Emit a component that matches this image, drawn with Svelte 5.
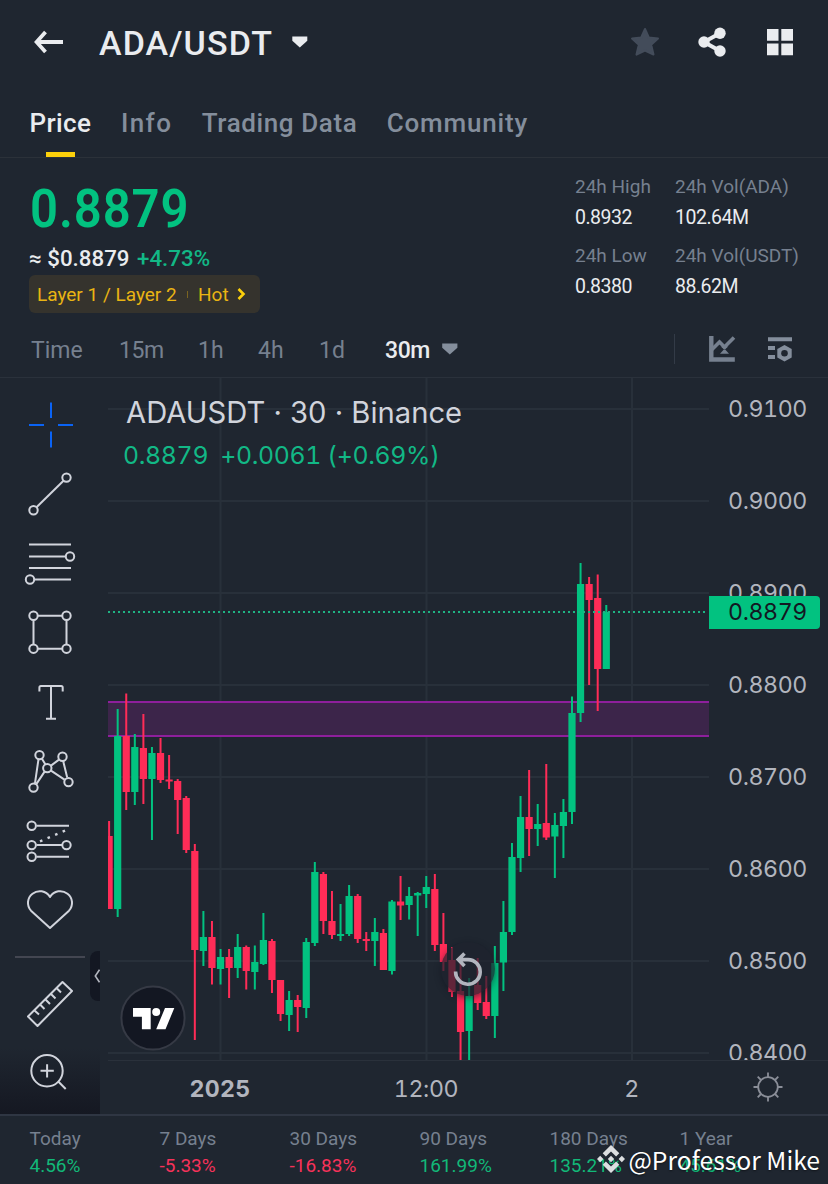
<script>
  const tabs = ["Price", "Info", "Trading Data", "Community"];
  let activeTab = "Price";

  const stats = [
    { label: "24h High", value: "0.8932" },
    { label: "24h Vol(ADA)", value: "102.64M" },
    { label: "24h Low", value: "0.8380" },
    { label: "24h Vol(USDT)", value: "88.62M" },
  ];

  const intervals = ["Time", "15m", "1h", "4h", "1d", "30m"];
  let activeInterval = "30m";

  const periods = [
    { label: "Today", value: "4.56%" },
    { label: "7 Days", value: "-5.33%" },
    { label: "30 Days", value: "-16.83%" },
    { label: "90 Days", value: "161.99%" },
    { label: "180 Days", value: "135.21%" },
    { label: "1 Year", value: "45.61%" },
  ];

  const prices = ["0.9100", "0.9000", "0.8900", "0.8800", "0.8700", "0.8600", "0.8500", "0.8400"];
  const gridY = prices.map((_, i) => 409 + i * 92);
  const gridX = [220.5, 426.5, 632];

  // high, body top, body bottom, low, direction (1 = up)
  const candles = [
    [821, 836, 909, 909, 0], [709, 736, 909, 917, 1], [693.5, 736, 792, 810, 0],
    [734, 747, 792, 805, 1], [714, 748, 779, 804, 0], [747, 753, 779, 840, 1],
    [738, 753, 780, 783, 0], [755, 779.5, 781.5, 789, 0], [779, 781, 800, 834, 0],
    [796, 798, 850, 853, 0], [844, 851, 950, 1040, 0], [911, 937, 951, 966, 1],
    [921, 937, 968, 984.5, 0], [949, 957, 969, 984.5, 1], [949, 957, 968, 998, 0],
    [934, 947, 968, 978, 1], [945.5, 947, 971, 989.5, 0], [945.5, 962, 972, 989.5, 1],
    [913, 940, 964, 965, 1], [939, 941, 980, 993, 0], [980, 980, 1014, 1021, 0],
    [991, 1000, 1015, 1031, 1], [995, 1000, 1007, 1032, 0], [938, 942, 1008, 1018, 1],
    [862, 872, 943, 946, 1], [872, 874, 921, 934, 0], [891, 921, 935, 939, 0],
    [904, 934, 936, 941, 1], [885, 896, 934, 936, 1], [894, 896, 939, 943, 0],
    [932, 939, 941, 951, 0], [918, 932, 941, 966, 1], [929, 933, 970, 970, 0],
    [900, 901.5, 971, 974.5, 1], [876, 901.5, 905.5, 920, 0], [887, 896, 905, 919.5, 1],
    [892, 893, 895.5, 936, 1], [876, 887, 894, 908, 1], [874, 889, 945, 951, 0],
    [913, 944, 962, 971, 0], [947, 960, 992, 997, 0], [958, 991, 1032, 1062, 0],
    [978, 996, 1031, 1062, 1], [958, 985, 1003, 1010, 0], [976, 1002, 1016, 1019, 0],
    [946, 963, 1016, 1038, 1], [901, 932, 962.5, 991, 1], [843, 857, 932, 935, 1],
    [796, 817, 858, 872, 1], [770, 817, 829, 856, 0], [804, 824, 829, 846, 1],
    [764, 823, 837.5, 840, 0], [813, 825, 836.5, 878, 1], [799, 812, 826, 858, 1],
    [696.5, 713, 812, 824, 1], [563, 584, 713, 722, 1], [577, 584, 600, 685, 0],
    [574.5, 598, 669, 711, 0], [605, 612, 669, 669, 1],
  ];
  const cx = (i) => 109.1 + i * 8.572;
</script>

<div class="screen">
  <header>
    <button class="back" aria-label="Back">
      <svg width="30" height="24" viewBox="0 0 30 24"><path d="M12.500 2 3.600 12l8.900 10M4 12h26" fill="none" stroke="#eaecef" stroke-width="3.800" /></svg>
    </button>
    <h1>ADA/USDT</h1>
    <svg class="caret" width="16" height="12" viewBox="0 0 16 12"><path d="M.3.5h15v4.200L7.800 11.500.3 4.700z" fill="#eaecef" /></svg>
    <div class="actions">
      <svg width="30" height="30" viewBox="0 0 30 30"><path d="m15 2 3.800 8.500 9.200 1.100-6.800 6.200 2.300 9.800L15 23.500l-8.500 4.100 2.300-9.800L2 11.600l9.200-1.100z" fill="#434c5a" stroke="#434c5a" stroke-width="2" stroke-linejoin="round" /></svg>
      <svg width="30" height="30" viewBox="0 0 30 30"><path d="M23 6.300 7 15l16 9" fill="none" stroke="#eaecef" stroke-width="4" /><g fill="#eaecef"><circle cx="23" cy="6.300" r="5.700" /><circle cx="7" cy="15" r="5.700" /><circle cx="23" cy="24" r="5.700" /></g></svg>
      <svg width="30" height="30" viewBox="0 0 30 30"><path d="M3 2h11.500v11.700H3zM17.300 2H29v11.700H17.300zM3 16.500h11.500v11.700H3zM17.300 16.500H29v11.700H17.300z" fill="#eaecef" /></svg>
    </div>
  </header>

  <nav class="tabs">
    {#each tabs as tab}
      <button class:active={tab === activeTab} on:click={() => (activeTab = tab)}>{tab}</button>
    {/each}
  </nav>

  <section class="summary">
    <div class="quote">
      <div class="price">0.8879</div>
      <div class="fiat">≈ $0.8879 <span>+4.73%</span></div>
      <div class="tag">
        <span class="layer">Layer 1 / Layer 2</span><i></i><span>Hot</span>
        <svg width="9" height="12" viewBox="0 0 9 12"><path d="m1.500 1 5 5-5 5" fill="none" stroke="#fcd00b" stroke-width="2.600" /></svg>
      </div>
    </div>
    <div class="stats">
      {#each stats as stat}
        <div>
          <div class="label">{stat.label}</div>
          <div class="value">{stat.value}</div>
        </div>
      {/each}
    </div>
  </section>

  <div class="intervals">
    {#each intervals as interval}
      <button class:active={interval === activeInterval} on:click={() => (activeInterval = interval)}>{interval}</button>
    {/each}
    <svg class="more" width="16" height="12" viewBox="0 0 16 12"><path d="M.2.5h15.200v4.300L7.800 11.500.2 4.800z" fill="#848e9c" /></svg>
    <div class="chart-actions">
      <svg width="28" height="28" viewBox="0 0 28 28"><path d="M3.300 1v23.500h23.500" fill="none" stroke="#76808f" stroke-width="4.400" /><path d="m4 14.500 7.500-7.500 5 5L26 2.500" fill="none" stroke="#76808f" stroke-width="3.600" /><path d="m12.700 11.500 3.800 3.300 3.800-3.300zM12 18.800l4.500-5 4.500 5z" fill="#76808f" /></svg>
      <svg width="26" height="26" viewBox="0 0 26 26"><path d="M1 3.300h24M1 12h7M1 21h7" stroke="#848e9c" stroke-width="4" /><path d="M17.500 9l7.200 4.100v8.300l-7.200 4.100-7.200-4.100v-8.300z" fill="#848e9c" /><circle cx="17.500" cy="17.200" r="3.300" fill="#1f2630" /></svg>
    </div>
  </div>

  <section class="chart">
    <aside class="tools">
      <svg class="tool" viewBox="22 390.400 56 69.300"><path d="M29 425.300h15M58 425.300h15M51 403v15.500M51 432v16" stroke="#0a63f5" /></svg>
      <svg class="tool" viewBox="22 459.700 56 69.300"><path d="m36.500 507 27-26.500" /><circle cx="33.500" cy="510" r="4.200" /><circle cx="66.500" cy="477.300" r="4.200" /></svg>
      <svg class="tool" viewBox="22 529 56 69.300"><path d="M29 544.600h42M29 556.500h37M29 568h42M34 579.500h37" /><circle cx="70" cy="556.500" r="4.200" /><circle cx="30" cy="579.500" r="4.200" /></svg>
      <svg class="tool" viewBox="22 598.300 56 69.300"><path d="M38 616h24M38 649h24M33.500 620.500v24M66.500 620.500v24" /><circle cx="33.500" cy="616" r="4.200" /><circle cx="66.500" cy="616" r="4.200" /><circle cx="33.500" cy="649" r="4.200" /><circle cx="66.500" cy="649" r="4.200" /></svg>
      <svg class="tool" viewBox="22 667.600 56 69.300"><path d="M39.400 691v-4q0-1.500 1.500-1.500h20.300q1.500 0 1.500 1.500v4M51 685.500v33M46 718.400h10" /></svg>
      <svg class="tool" viewBox="22 736.900 56 69.300"><path d="m35 783 3.500-24M36.300 784l8.300-12.500M41.500 758l4 6.500M51 765.500l8-6M51 770.500l13.500 9M63.200 761l4 16.500" /><circle cx="39.500" cy="755" r="4.200" /><circle cx="62.500" cy="756.700" r="4.200" /><circle cx="47.300" cy="768" r="4.200" /><circle cx="33.500" cy="787.500" r="4.200" /><circle cx="68.500" cy="782" r="4.200" /></svg>
      <svg class="tool" viewBox="22 806.200 56 69.300"><path d="M36.500 826H69M36.500 845.300H62M36.500 857H69" /><path d="m40 841.500 27-11.500" stroke-width="2.400" stroke-dasharray="2.600 5.600" /><circle cx="31.700" cy="826" r="4.200" /><circle cx="31.700" cy="845.300" r="4.200" /><circle cx="66.500" cy="845.300" r="4.200" /><circle cx="31.700" cy="857" r="4.200" /></svg>
      <svg class="tool" viewBox="22 875.500 56 69.300"><path d="M50 897.500c-4-6.500-12-7.500-17.500-3.300-5.500 4.300-6 12-1.500 17L50 928.400l19-17.200c4.500-5 4-12.700-1.500-17-5.500-4.200-13.500-3.200-17.500 3.300z" stroke-linejoin="round" /></svg>
      <hr />
      <svg class="tool" viewBox="22 970 56 69.300"><path d="m62.500 982 9.500 9-34.500 35-9.500-9.500zM34.500 1010.500l4.500 4M40 1004.500l4.500 4.500M45.500 999.500l4.500 4.500M51 994l4.500 4.500M56.500 988l4.500 4.500" stroke-linejoin="round" /></svg>
      <svg class="tool" viewBox="22 1039.700 56 69.300"><circle cx="47" cy="1070.500" r="15.700" /><path d="M40.500 1070.500h13.300M47.100 1064v13.300M58 1081l7.700 7.700" /></svg>
    </aside>

    <div class="collapse"><svg width="6" height="14" viewBox="0 0 6 14"><path d="M5.500.7 1.300 7l4.200 6.300" fill="none" stroke="#b2b5be" stroke-width="1.600" /></svg></div>

    <div class="plot">
      <svg class="candles" width="601" height="683" viewBox="108 378 601 683">
        {#each gridY as y}
          <rect x="108" y={y - 1} width="601" height="2" fill="#28303a" />
        {/each}
        {#each gridX as x}
          <rect x={x - 1} y="378" width="2" height="683" fill="#28303a" />
        {/each}
        <rect x="108" y="702" width="601" height="34" fill="#3c254a" />
        <path d="M108 702h601M108 736h601" stroke="#8e1f9c" stroke-width="2" />
        {#each candles as [high, top, bottom, low, up], i}
          <g class:up>
            <rect x={cx(i) - 1} y={high} width="2" height={low - high} />
            <rect x={cx(i) - 3.6} y={top} width="7.200" height={bottom - top} />
          </g>
        {/each}
        <path d="M108 612h600" stroke="#1fb383" stroke-width="2" stroke-dasharray="2 3" />
      </svg>
      <div class="legend">
        <div class="symbol">ADAUSDT · 30 · Binance</div>
        <div class="change"><span>0.8879</span><span>+0.0061 (+0.69%)</span></div>
      </div>
      <svg class="tv" width="66" height="66" viewBox="120 985 66 66"><circle cx="153" cy="1018" r="31.600" fill="#131722" stroke="#363a45" stroke-width="2" /><g fill="#fff"><path d="M133 1008h17.700v21.300h-8.800v-12.600H133zM165 1008h9.300l-8.800 21.300h-9.300z" /><circle cx="156.200" cy="1012" r="4" /></g></svg>
      <div class="reset">
        <svg width="30" height="34" viewBox="0 0 30 34"><path d="M2.600 19.500A12.300 12.300 0 1 0 15 7.600H6.500M11.500 1.500 5.300 7.600l6.200 6.400" fill="none" stroke="#b2b5be" stroke-width="3.600" /></svg>
      </div>
    </div>

    <div class="price-axis">
      {#each prices as price}
        <div>{price}</div>
      {/each}
      <div class="last">0.8879</div>
    </div>

    <div class="time-axis">
      <b>2025</b><span>12:00</span><span>2</span>
    </div>
    <div class="axis-settings">
      <svg width="30" height="30" viewBox="-15 -15 30 30" fill="none" stroke="#8a8e98" stroke-width="1.800"><circle r="9.800" /><path d="M0-10v-4.500M0 10v4.500M-10 0h-4.500M10 0h4.500M7 7l3.300 3.300M-7-7l-3.300-3.300M7-7l3.300-3.300M-7 7l-3.300 3.300" /></svg>
    </div>
  </section>

  <footer>
    {#each periods as period}
      <div>
        <div class="label">{period.label}</div>
        <div class="pct" class:down={period.value.startsWith("-")}>{period.value}</div>
      </div>
    {/each}
  </footer>

  <div class="watermark">
    <svg width="28" height="28" viewBox="0 0 28 28" fill="#dcdee0"><path d="m14 0 8.300 8.300-3.200 3.200L14 6.400l-5.100 5.100-3.200-3.200zM14 28l8.300-8.300-3.200-3.200-5.100 5.100-5.100-5.100-3.200 3.200zM14 10.800l3.200 3.200-3.200 3.200-3.200-3.200zM3.200 10.800 6.400 14l-3.200 3.200L0 14zM24.800 10.800 28 14l-3.200 3.200-3.200-3.200z" /></svg>
    <span>@Professor Mike</span>
  </div>
</div>

<style>
  :global(body) {
    background: #1f2630;
  }
  .screen {
    position: relative;
    width: 828px;
    height: 1184px;
    overflow: hidden;
    background: #1f2630;
    color: #eaecef;
    font-family: Roboto, "Liberation Sans", sans-serif;
  }
  button {
    padding: 0;
    border: 0;
    background: none;
    color: inherit;
    font: inherit;
    letter-spacing: inherit;
    cursor: pointer;
  }
  svg {
    display: block;
    flex: none;
  }

  header {
    display: flex;
    align-items: center;
    box-sizing: border-box;
    height: 85px;
    padding: 0 34px 2px 33px;
  }
  h1 {
    margin: 2px 0 0 36px;
    width: 193px;
    font-size: 34px;
    font-weight: 500;
    letter-spacing: 1.1px;
  }
  .actions {
    display: flex;
    gap: 37px;
    margin-left: auto;
  }

  .tabs {
    display: flex;
    align-items: flex-start;
    gap: 29.500px;
    box-sizing: border-box;
    height: 73px;
    padding-left: 29.500px;
    border-bottom: 1px solid #2b3139;
    color: #848e9c;
    font-size: 26px;
    font-weight: 500;
    letter-spacing: 0.6px;
  }
  .tabs button {
    display: flex;
    flex-direction: column;
    align-items: center;
    height: 72px;
    line-height: 76px;
  }
  .tabs button:nth-child(2) {
    letter-spacing: 1.400px;
  }
  .tabs button:nth-child(4) {
    letter-spacing: 0.800px;
  }
  .tabs .active {
    color: #eaecef;
    letter-spacing: 0.4px;
  }
  .tabs .active::after {
    content: "";
    width: 29px;
    height: 5px;
    margin-top: -9px;
    background: #fcd00b;
  }

  .summary {
    display: flex;
    justify-content: space-between;
    height: 167px;
    padding-left: 29px;
  }
  .price {
    height: 84px;
    margin: 8px 0 0 1px;
    color: #02c280;
    font-size: 54.500px;
    font-weight: 600;
    line-height: 85px;
    letter-spacing: 1px;
    transform: scaleX(0.9);
    transform-origin: left;
  }
  .fiat {
    height: 25px;
    font-size: 22.300px;
    font-weight: 500;
    line-height: 17px;
    white-space: nowrap;
  }
  .fiat span {
    margin-left: 2px;
    color: #12b886;
  }
  .tag {
    display: flex;
    align-items: center;
    box-sizing: border-box;
    width: 231px;
    height: 38px;
    padding-left: 8px;
    border-radius: 6px;
    background: #35332d;
    color: #e9b413;
    font-size: 19px;
  }
  .tag .layer {
    width: 142px;
    white-space: nowrap;
  }
  .tag i {
    width: 1px;
    height: 7px;
    margin: 0 10px 0 8px;
    background: #7a6421;
  }
  .tag svg {
    margin-left: 8px;
  }

  .stats {
    display: grid;
    grid-template-columns: 100px 153px;
    grid-auto-rows: 69.500px;
    padding-top: 12.500px;
    font-size: 19px;
    line-height: 31px;
    white-space: nowrap;
  }
  .stats .value {
    font-size: 19.500px;
    letter-spacing: -0.5px;
  }
  .label {
    color: #76808f;
  }

  .intervals {
    display: flex;
    align-items: center;
    box-sizing: border-box;
    height: 53px;
    padding: 0 35px 4px 31px;
    border-bottom: 1px solid #2a313b;
    color: #76808f;
    font-size: 23px;
  }
  .intervals button {
    width: 60px;
    padding-top: 3px;
    text-align: left;
  }
  .intervals button:nth-child(1) {
    width: 88px;
  }
  .intervals button:nth-child(2) {
    width: 79px;
    letter-spacing: -0.400px;
  }
  .intervals button:nth-child(4) {
    width: 61px;
  }
  .intervals button:nth-child(5) {
    width: 66px;
  }
  .intervals .active {
    width: 57px;
    color: #eaecef;
    font-weight: 500;
    letter-spacing: -0.400px;
  }
  .chart-actions {
    display: flex;
    align-items: center;
    gap: 31px;
    height: 30px;
    margin-left: auto;
    padding-left: 33px;
    border-left: 1px solid #333b47;
  }

  .chart {
    position: relative;
    display: grid;
    grid-template: 683px 53px / 108px 601px 119px;
    border-bottom: 2px solid #2f3643;
    font-family: Inter, sans-serif;
    font-variant-numeric: tabular-nums;
  }
  .tools {
    grid-row: 1 / 3;
    display: flex;
    flex-direction: column;
    align-items: center;
    box-sizing: border-box;
    width: 100px;
    padding-top: 12.400px;
    background: linear-gradient(transparent 91%, #151822);
  }
  .tool {
    width: 56px;
    height: 69.300px;
    fill: none;
    stroke: #d1d4dc;
    stroke-width: 2;
  }
  hr {
    box-sizing: border-box;
    width: 70px;
    height: 2px;
    margin: 11.600px 0 12px;
    border: 0;
    background: #434651;
  }
  .collapse {
    position: absolute;
    top: 573px;
    left: 90px;
    display: flex;
    align-items: center;
    justify-content: flex-end;
    width: 10px;
    height: 50px;
    border-radius: 8px 0 0 8px;
    background: #131722;
  }

  .plot {
    position: relative;
    border-bottom: 1px solid #2a313b;
    overflow: hidden;
  }
  .candles g {
    fill: #ff2c57;
  }
  .candles g.up {
    fill: #02c280;
  }
  .legend {
    position: absolute;
    top: 13.500px;
    left: 18px;
    white-space: nowrap;
  }
  .symbol {
    color: #d1d4dc;
    font-size: 29.200px;
    line-height: 41px;
    font-variant-numeric: normal;
  }
  .change {
    display: flex;
    gap: 12px;
    margin: 3px 0 0 -3px;
    color: #12b886;
    font-size: 24.800px;
    line-height: 38px;
    letter-spacing: -0.320px;
  }
  .tv {
    position: absolute;
    top: 607px;
    left: 12px;
  }
  .reset {
    position: absolute;
    top: 564px;
    left: 333px;
    display: flex;
    align-items: center;
    justify-content: center;
    width: 54px;
    height: 54px;
    border-radius: 50%;
    background: rgba(30, 34, 45, 0.7);
    box-shadow: 0 2px 6px rgba(15, 18, 27, 0.5);
  }

  .price-axis {
    position: relative;
    height: 682px;
    border-bottom: 1px solid #2a313b;
    overflow: hidden;
    color: #b2b5be;
    font-size: 23.200px;
    line-height: 92px;
    letter-spacing: -0.400px;
  }
  .price-axis div {
    height: 92px;
    padding-left: 19px;
  }
  .price-axis div:first-child {
    margin-top: -15px;
  }
  .price-axis .last {
    position: absolute;
    top: 218px;
    left: 0;
    box-sizing: border-box;
    width: 111px;
    height: 33px;
    border-radius: 0 4px 4px 0;
    background: #02c280;
    color: #131722;
    line-height: 33px;
  }
  .time-axis {
    grid-column: 2;
    display: grid;
    grid-template-columns: 224px 188px 223px;
    align-items: center;
    justify-items: center;
    padding-top: 3px;
    color: #b2b5be;
    font-size: 23.200px;
    letter-spacing: -0.400px;
  }
  .time-axis b {
    letter-spacing: 0.300px;
  }
  .axis-settings {
    display: grid;
    place-items: center;
    padding: 0 2px 2px 0;
  }

  footer {
    display: grid;
    grid-template-columns: repeat(6, 130px);
    padding: 9px 0 0 29.500px;
    font-size: 19px;
    line-height: 27px;
  }
  .pct {
    color: #12b878;
  }
  .pct.down {
    color: #f6325a;
  }

  .watermark {
    position: absolute;
    right: 8px;
    bottom: 9px;
    display: flex;
    align-items: center;
    gap: 3px;
    color: #fff;
    font: 24.700px/32px "Noto Sans CJK SC", sans-serif;
    white-space: nowrap;
    text-shadow: 0 1px 2px rgba(0, 0, 0, 0.5);
  }
</style>
